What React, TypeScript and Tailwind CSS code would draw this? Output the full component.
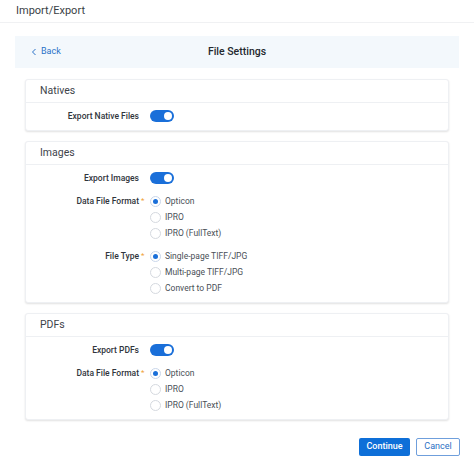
import React from 'react';

const font = { fontFamily: 'Roboto, "Liberation Sans", sans-serif' };

function Toggle() {
  return (
    <span className="relative inline-flex h-[12px] w-[24px] items-center rounded-full bg-[#1a6fd9]">
      <span className="absolute right-[2px] h-[8px] w-[8px] rounded-full bg-white" />
    </span>
  );
}

function Radio({ checked, label }: { checked?: boolean; label: string }) {
  return (
    <div className="flex h-[16px] items-center gap-[4px]">
      <span
        className={`flex h-[11px] w-[11px] items-center justify-center rounded-full border ${
          checked ? 'border-[#c9d6ea]' : 'border-[#d5d9df]'
        } bg-white`}
      >
        {checked && <span className="h-[5px] w-[5px] rounded-full bg-[#1a6fd9]" />}
      </span>
      <span className="text-[8.5px] text-[#4a4f57]">{label}</span>
    </div>
  );
}

function Row({ label, required, children }: { label: string; required?: boolean; children: React.ReactNode }) {
  return (
    <div className="flex items-start">
      <div className="flex h-[16px] w-[120px] shrink-0 items-center justify-end">
        <span className="text-[8.5px] font-medium text-[#30353c]">{label}</span>
        <span className={`ml-[2px] w-[5px] text-[8px] ${required ? 'text-[#f0a23a]' : 'text-transparent'}`}>*</span>
      </div>
      <div className="ml-[4px] flex flex-col">{children}</div>
    </div>
  );
}

function Card({ title, children }: { title: string; children: React.ReactNode }) {
  return (
    <div className="rounded-[3px] border border-[#eef0f3] bg-white shadow-[0_1px_2px_rgba(0,0,0,0.12)]">
      <div className="flex h-[23px] items-center border-b border-[#eef0f3] px-[14px] text-[10.5px] text-[#3e434a]">
        {title}
      </div>
      <div className="flex flex-col gap-[7px] pb-[6px] pt-[5px]">{children}</div>
    </div>
  );
}

export default function App() {
  return (
    <div className="h-[468px] w-[474px] bg-white" style={font}>
      <div className="flex h-[23px] items-center border-b border-[#f0f1f3] px-[16px] pt-[1px] text-[11px] text-[#3a3f46]">
        Import/Export
      </div>
      <div className="px-[15px] pt-[13px]">
        <div className="relative flex h-[32px] items-center bg-[#f3f8fc]">
          <span className="ml-[16px] flex items-center gap-[4px] text-[9px] text-[#2a72c8]">
            <svg width="6" height="8" viewBox="0 0 6 8" fill="none">
              <path d="M4.5 1 L1.5 4 L4.5 7" stroke="#2a72c8" strokeWidth="1" />
            </svg>
            Back
          </span>
          <span className="absolute left-1/2 -translate-x-1/2 text-[10.5px] font-medium text-[#24282e]">File Settings</span>
        </div>
      </div>
      <div className="flex flex-col gap-[10px] px-[25px] pt-[11px]">
        <Card title="Natives">
          <Row label="Export Native Files">
            <div className="flex h-[16px] items-center"><Toggle /></div>
          </Row>
        </Card>
        <Card title="Images">
          <Row label="Export Images">
            <div className="flex h-[16px] items-center"><Toggle /></div>
          </Row>
          <Row label="Data File Format" required>
            <Radio checked label="Opticon" />
            <Radio label="IPRO" />
            <Radio label="IPRO (FullText)" />
          </Row>
          <Row label="File Type" required>
            <Radio checked label="Single-page TIFF/JPG" />
            <Radio label="Multi-page TIFF/JPG" />
            <Radio label="Convert to PDF" />
          </Row>
        </Card>
        <Card title="PDFs">
          <Row label="Export PDFs">
            <div className="flex h-[16px] items-center"><Toggle /></div>
          </Row>
          <Row label="Data File Format" required>
            <Radio checked label="Opticon" />
            <Radio label="IPRO" />
            <Radio label="IPRO (FullText)" />
          </Row>
        </Card>
      </div>
      <div className="flex justify-end gap-[6px] px-[14px] pt-[18px]">
        <button className="h-[18px] w-[51px] rounded-[2px] bg-[#0e6fd8] text-[9px] font-medium text-white">Continue</button>
        <button className="h-[18px] w-[44px] rounded-[2px] border border-[#6f9fdc] bg-white text-[9px] text-[#2a6fc4]">Cancel</button>
      </div>
    </div>
  );
}
